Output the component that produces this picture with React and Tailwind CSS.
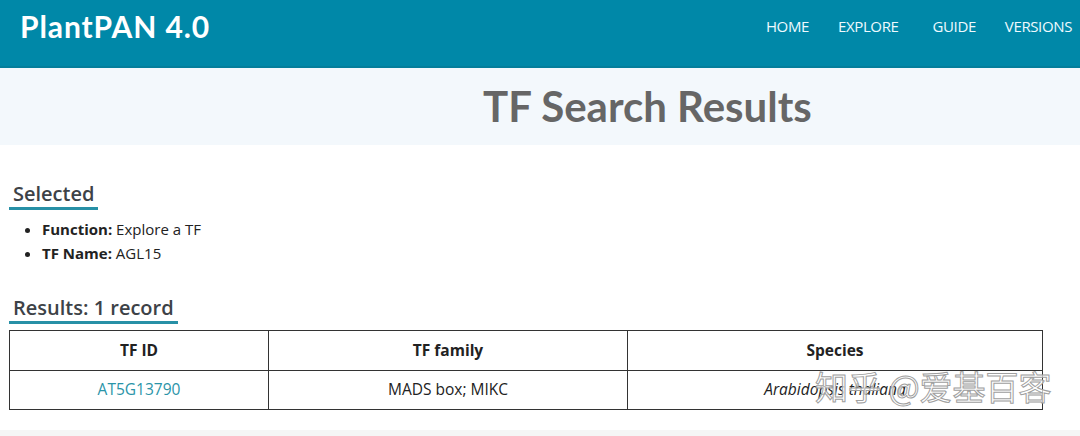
const NavLink = ({ label, className = "" }) => (
  <a href="#" className={`text-[15px] text-[#eefaff] tracking-tight ${className}`}>
    {label}
  </a>
);

const SectionTitle = ({ children }) => (
  <div className="inline-block border-b-[3px] border-[#2790a6] pl-1 pr-1">
    <h2 className="text-[20px] leading-[27px] font-semibold text-[#3d4247]">{children}</h2>
  </div>
);

export default function App() {
  return (
    <div className="relative w-[1080px] h-[436px] bg-white font-['Open_Sans',sans-serif] overflow-hidden">
      <header className="h-[68px] bg-[#0088a8] flex items-center justify-between pl-5 pr-[7px] border-b-2 border-[#047e9b]">
        <div className="font-['Lato',sans-serif] font-bold text-white text-[30px] tracking-[0.03em] pb-[14px]">PlantPAN 4.0</div>
        <nav className="flex items-center gap-[29px] pb-[14px] pr-[1px]">
          <NavLink label="HOME" />
          <NavLink label="EXPLORE" />
          <NavLink label="GUIDE" className="ml-[5px]" />
          <NavLink label="VERSIONS" />
        </nav>
      </header>

      <div className="h-[77px] bg-[#f3f8fc] flex items-center pl-[483px]">
        <h1 className="font-['Lato',sans-serif] font-bold text-[42px] text-[#666666]">TF Search Results</h1>
      </div>

      <main className="pl-[9px] pr-[38px] pt-[35px]">
        <SectionTitle>Selected</SectionTitle>
        <ul className="list-disc pl-[33px] mt-[7px] text-[15px] leading-[24px] text-[#222]">
          <li>
            <b className="font-bold">Function:</b> Explore a TF
          </li>
          <li>
            <b className="font-bold">TF Name:</b> AGL15
          </li>
        </ul>

        <div className="mt-[29px]">
          <SectionTitle>Results: 1 record</SectionTitle>
        </div>

        <table className="mt-[6px] w-[1034px] border-collapse text-[15.5px] text-[#222]">
          <thead>
            <tr className="h-[40px]">
              <th className="w-[259px] border border-[#333] font-bold">TF ID</th>
              <th className="w-[359px] border border-[#333] font-bold">TF family</th>
              <th className="border border-[#333] font-bold">Species</th>
            </tr>
          </thead>
          <tbody>
            <tr className="h-[39px]">
              <td className="border border-[#333] text-center">
                <a href="#" className="text-[#2a94a8]">AT5G13790</a>
              </td>
              <td className="border border-[#333] text-center">MADS box; MIKC</td>
              <td className="border border-[#333] text-center italic">Arabidopsis thaliana</td>
            </tr>
          </tbody>
        </table>
      </main>

      <div className="absolute left-0 right-0 bottom-0 h-[6px] bg-[#f5f5f5]" />

      <div className="absolute left-[815px] top-[366px] text-[33px] leading-[40px] text-white/70 font-['Noto_Sans_CJK_SC',sans-serif] [-webkit-text-stroke:1px_#a0a0a0]">
        知乎 @爱基百客
      </div>
    </div>
  );
}
